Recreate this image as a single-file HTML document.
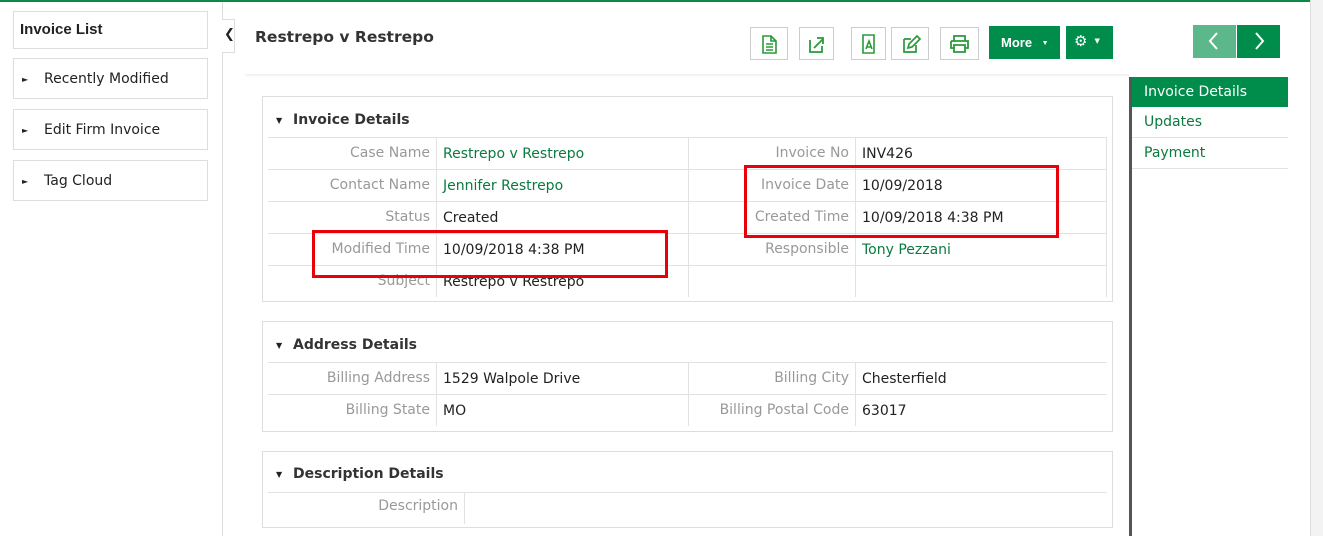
<!DOCTYPE html><html><head><style>
*{margin:0;padding:0;box-sizing:border-box}
body{width:1323px;height:536px;overflow:hidden;background:#fff;font-family:"DejaVu Sans","Liberation Sans",sans-serif;font-size:14px;color:#222;position:relative}
.a{position:absolute}
.box{position:absolute;border:1px solid #ddd}
.h{position:absolute;height:1px;background:#e2e2e2}
.v{position:absolute;width:1px;background:#e2e2e2}
.lab{position:absolute;text-align:right;color:#999;white-space:nowrap}
.val{position:absolute;white-space:nowrap}
.g{color:#0a7a3e}
.side{position:absolute;left:13px;width:195px;border:1px solid #ddd;font-size:14px}
.side span.t{position:absolute;left:30px;top:12px}
.side span.tri{position:absolute;left:8px;top:16px;font-size:8px}
.ib{position:absolute;top:27px;height:33px;border:1px solid #ccc;background:#fff}
.sec{position:absolute;font-weight:bold;font-size:14px;color:#333}
.red{position:absolute;border:3px solid #e8000b}
</style></head><body>
<div class="a" style="left:0;top:0;width:1310px;height:2px;background:#0a8a48"></div>
<div class="a" style="left:1310px;top:0;width:13px;height:536px;background:#f3f3f3;border-left:1px solid #ddd"></div>
<div class="side" style="top:11px;height:38px;font-weight:bold;font-family:'Liberation Sans',sans-serif;font-size:15px"><span style="position:absolute;left:6px;top:9px">Invoice List</span></div>
<div class="side" style="top:58px;height:41px"><span class="tri">►</span><span class="t">Recently Modified</span></div>
<div class="side" style="top:109px;height:41px"><span class="tri">►</span><span class="t">Edit Firm Invoice</span></div>
<div class="side" style="top:160px;height:41px"><span class="tri">►</span><span class="t">Tag Cloud</span></div>
<div class="v" style="left:222px;top:2px;height:534px;background:#ddd"></div>
<div class="a" style="left:222px;top:19px;width:13px;height:34px;border:1px solid #ddd;border-left:none;background:#fff;font-size:13px;font-weight:bold;padding:7px 0 0 2px">❮</div>
<div class="a" style="left:255px;top:28px;font-size:15.5px;font-weight:bold;color:#333">Restrepo v Restrepo</div>
<div class="ib" style="left:750px;width:38px"><svg width="36" height="31"><path d="M12 8h8l5 5v12h-13z M20 8v5h5 M15 16h7 M15 19h7 M15 22h7" fill="none" stroke="#2a9a3a" stroke-width="1.6"/></svg></div>
<div class="ib" style="left:799px;width:35px"><svg width="33" height="31"><path d="M10 12v12h12v-6 M14 20l9-9 M17 10h6v6" fill="none" stroke="#2a9a3a" stroke-width="1.8"/></svg></div>
<div class="ib" style="left:851px;width:35px"><svg width="33" height="31"><path d="M11 7h11v18h-11z M14 21l3-8 3 8 M15 19h4" fill="none" stroke="#2a9a3a" stroke-width="1.6"/></svg></div>
<div class="ib" style="left:891px;width:38px"><svg width="36" height="31"><path d="M12 11h7 M12 11v13h12v-7 M16 20l1-4 8-8 3 3-8 8z" fill="none" stroke="#2a9a3a" stroke-width="1.7"/></svg></div>
<div class="ib" style="left:940px;width:39px"><svg width="37" height="31"><path d="M13 13v-5h11v5 M10 13h17v7h-3 M13 20h-3v-7 M13 17h11v7h-11z" fill="none" stroke="#2a9a3a" stroke-width="1.8"/></svg></div>
<div class="a" style="left:989px;top:26px;width:71px;height:33px;background:#008c4a;color:#fff;font-weight:bold;font-family:'Liberation Sans',sans-serif;font-size:13px;padding:9px 0 0 12px">More <span style="font-size:7px;margin-left:6px;vertical-align:2px">▼</span></div>
<div class="a" style="left:1066px;top:26px;width:47px;height:33px;background:#008c4a;color:#fff;font-size:15px;padding:6px 0 0 8px">⚙<span style="font-size:7px;margin-left:7px;vertical-align:3px">▼</span></div>
<div class="a" style="left:1193px;top:25px;width:43px;height:33px;background:#5cb88a"><svg width="43" height="33"><path d="M24 8l-7 8 7 8" fill="none" stroke="#fff" stroke-width="2"/></svg></div>
<div class="a" style="left:1237px;top:25px;width:43px;height:33px;background:#008c4a"><svg width="43" height="33"><path d="M19 8l7 8-7 8" fill="none" stroke="#fff" stroke-width="2"/></svg></div>
<div class="a" style="left:245px;top:74px;width:884px;height:3px;background:linear-gradient(#eee,#fff)"></div>
<div class="a" style="left:1129px;top:77px;width:3px;height:459px;background:#555"></div>
<div class="a" style="left:1132px;top:77px;width:156px;height:30px;background:#008c4a;color:#fff;font-size:14px;padding:7px 0 0 12px">Invoice Details</div>
<div class="a g" style="left:1144px;top:114px;font-size:14px">Updates</div>
<div class="h" style="left:1132px;top:137px;width:156px"></div>
<div class="a g" style="left:1144px;top:145px;font-size:14px">Payment</div>
<div class="h" style="left:1132px;top:168px;width:156px"></div>

<div class="box" style="left:262px;top:96px;width:851px;height:206px"></div>
<div class="a" style="left:276px;top:116px;font-size:8px">▼</div>
<div class="sec" style="left:293px;top:112px">Invoice Details</div>
<div class="h" style="left:268px;top:137px;width:839px"></div>
<div class="h" style="left:268px;top:169px;width:839px"></div>
<div class="h" style="left:268px;top:201px;width:839px"></div>
<div class="h" style="left:268px;top:233px;width:839px"></div>
<div class="h" style="left:268px;top:265px;width:839px"></div>
<div class="v" style="left:436px;top:137px;height:160px"></div>
<div class="v" style="left:688px;top:137px;height:160px"></div>
<div class="v" style="left:855px;top:137px;height:160px"></div>
<div class="v" style="left:1106px;top:137px;height:160px"></div>
<div class="lab" style="right:893px;top:145px">Case Name</div><div class="val g" style="left:443px;top:146px">Restrepo v Restrepo</div>
<div class="lab" style="right:893px;top:177px">Contact Name</div><div class="val g" style="left:443px;top:178px">Jennifer Restrepo</div>
<div class="lab" style="right:893px;top:209px">Status</div><div class="val" style="left:443px;top:210px">Created</div>
<div class="lab" style="right:893px;top:241px">Modified Time</div><div class="val" style="left:443px;top:242px">10/09/2018 4:38 PM</div>
<div class="lab" style="right:893px;top:273px">Subject</div><div class="val" style="left:443px;top:274px">Restrepo v Restrepo</div>
<div class="lab" style="right:474px;top:145px">Invoice No</div><div class="val" style="left:862px;top:146px">INV426</div>
<div class="lab" style="right:474px;top:177px">Invoice Date</div><div class="val" style="left:862px;top:178px">10/09/2018</div>
<div class="lab" style="right:474px;top:209px">Created Time</div><div class="val" style="left:862px;top:210px">10/09/2018 4:38 PM</div>
<div class="lab" style="right:474px;top:241px">Responsible</div><div class="val g" style="left:862px;top:242px">Tony Pezzani</div>

<div class="box" style="left:262px;top:321px;width:851px;height:111px"></div>
<div class="a" style="left:276px;top:341px;font-size:8px">▼</div>
<div class="sec" style="left:293px;top:337px">Address Details</div>
<div class="h" style="left:268px;top:362px;width:839px"></div>
<div class="h" style="left:268px;top:394px;width:839px"></div>
<div class="v" style="left:436px;top:362px;height:64px"></div>
<div class="v" style="left:688px;top:362px;height:64px"></div>
<div class="v" style="left:855px;top:362px;height:64px"></div>
<div class="lab" style="right:893px;top:370px">Billing Address</div><div class="val" style="left:443px;top:371px">1529 Walpole Drive</div>
<div class="lab" style="right:893px;top:402px">Billing State</div><div class="val" style="left:443px;top:403px">MO</div>
<div class="lab" style="right:474px;top:370px">Billing City</div><div class="val" style="left:862px;top:371px">Chesterfield</div>
<div class="lab" style="right:474px;top:402px">Billing Postal Code</div><div class="val" style="left:862px;top:403px">63017</div>

<div class="box" style="left:262px;top:451px;width:851px;height:77px"></div>
<div class="a" style="left:276px;top:470px;font-size:8px">▼</div>
<div class="sec" style="left:293px;top:466px">Description Details</div>
<div class="h" style="left:268px;top:492px;width:839px"></div>
<div class="v" style="left:464px;top:492px;height:32px"></div>
<div class="lab" style="right:865px;top:498px">Description</div>

<div class="red" style="left:312px;top:230px;width:356px;height:48px"></div>
<div class="red" style="left:744px;top:165px;width:315px;height:73px"></div>
</body></html>
